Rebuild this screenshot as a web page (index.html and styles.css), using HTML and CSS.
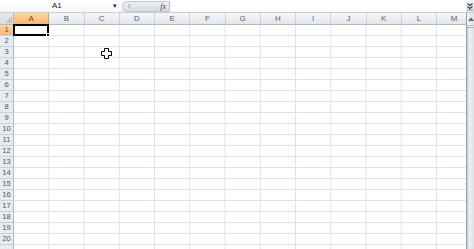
FILE: index.html
```html
<!DOCTYPE html>
<html>
<head>
<meta charset="utf-8">
<link rel="stylesheet" href="styles.css">
</head>
<body>
<div class="app">
  <div class="fbar">
    <div class="namebox"><span class="ref">A1</span><span class="dd">▾</span></div>
    <div class="pill"><span class="grip"></span><span class="fx">fx</span></div>
    <div class="finput"></div>
    <div class="expand">
      <svg width="8" height="9" viewBox="0 0 8 9"><path d="M1.5 1.5 L4 3.5 L6.5 1.5 M1.5 4.5 L4 6.5 L6.5 4.5" fill="none" stroke="#333" stroke-width="1.1"/><path d="M1 8 H7" stroke="#777" stroke-width="0.8"/></svg>
    </div>
  </div>
  <div class="main">
    <div class="sheet">
      <div class="corner"></div>
      <div class="colheads">
        <div class="ch sel">A</div><div class="ch">B</div><div class="ch">C</div><div class="ch">D</div><div class="ch">E</div><div class="ch">F</div><div class="ch">G</div><div class="ch">H</div><div class="ch">I</div><div class="ch">J</div><div class="ch">K</div><div class="ch">L</div><div class="ch">M</div>
      </div>
      <div class="rowheads">
        <div class="rh sel">1</div><div class="rh">2</div><div class="rh">3</div><div class="rh">4</div><div class="rh">5</div><div class="rh">6</div><div class="rh">7</div><div class="rh">8</div><div class="rh">9</div><div class="rh">10</div><div class="rh">11</div><div class="rh">12</div><div class="rh">13</div><div class="rh">14</div><div class="rh">15</div><div class="rh">16</div><div class="rh">17</div><div class="rh">18</div><div class="rh">19</div><div class="rh">20</div><div class="rh"></div>
      </div>
      <div class="cells">
        <div class="active"><span class="handle"></span></div>
        <svg class="pointer" width="11" height="11" viewBox="0 0 11 11"><path d="M3.5 0.5 H7.5 V3.5 H10.5 V7.5 H7.5 V10.5 H3.5 V7.5 H0.5 V3.5 H3.5 Z" fill="#fff" stroke="#000" stroke-width="1"/></svg>
      </div>
    </div>
    <div class="vscroll">
      <div class="sbtn"><svg width="6" height="4" viewBox="0 0 6 4"><path d="M0 4 L3 0.5 L6 4 Z" fill="#5d6470"/></svg></div>
      <div class="thumb"></div>
    </div>
  </div>
</div>
</body>
</html>
```

FILE: styles.css
```css
html, body {
  margin: 0;
  padding: 0;
  background: #ffffff;
}
body {
  width: 474px;
  height: 249px;
  overflow: hidden;
  font-family: "Liberation Sans", Arial, sans-serif;
}
.app {
  display: flex;
  flex-direction: column;
  width: 474px;
  height: 249px;
}
.fbar {
  display: flex;
  align-items: center;
  height: 12px;
  flex: 0 0 12px;
  border-bottom: 1px solid #c9ced6;
  background: linear-gradient(#ffffff, #f6f7f9);
}
.namebox {
  display: flex;
  align-items: center;
  width: 122px;
  height: 12px;
  box-sizing: border-box;
  padding-left: 52px;
  font-size: 8px;
  color: #222;
}
.ref {
  flex: 1;
  line-height: 10px;
}
.dd {
  font-size: 7px;
  color: #222;
  width: 8px;
  margin-right: 1px;
}
.pill {
  display: flex;
  align-items: center;
  width: 48px;
  height: 11px;
  box-sizing: border-box;
  border-radius: 6px 0 0 6px;
  background: linear-gradient(#eef0f3, #d7dbe1);
  border: 1px solid #c3c8d0;
  border-right: 1px solid #b9bec6;
  padding-left: 4px;
}
.grip {
  width: 3px;
  height: 5px;
  border-radius: 2px;
  background: #c7ccd3;
  border: 1px solid #e9ecf0;
}
.fx {
  margin-left: auto;
  margin-right: 3px;
  font-family: "Liberation Serif", serif;
  font-style: italic;
  font-size: 8px;
  color: #444;
  line-height: 9px;
}
.finput {
  flex: 1;
  height: 12px;
  background: #ffffff;
}
.expand {
  width: 8px;
  height: 12px;
  display: flex;
  align-items: center;
  justify-content: center;
  background: linear-gradient(#f4f5f7, #e2e5ea);
}
.main {
  flex: 1;
  display: flex;
  min-height: 0;
}
.sheet {
  flex: 1;
  display: grid;
  grid-template-columns: 14px 1fr;
  grid-template-rows: 12px 1fr;
  overflow: hidden;
  min-width: 0;
}
.corner {
  background: linear-gradient(#e6e9ed, #d9dde2);
  border-right: 1px solid #b3b9c2;
  border-bottom: 1px solid #b3b9c2;
  box-sizing: border-box;
  position: relative;
}
.corner::after {
  content: "";
  position: absolute;
  right: 1px;
  bottom: 1px;
  width: 0;
  height: 0;
  border-left: 7px solid transparent;
  border-bottom: 7px solid #bcc3cb;
}
.colheads {
  display: flex;
  overflow: hidden;
  border-bottom: 1px solid #b3b9c2;
  box-sizing: border-box;
  background: linear-gradient(#f5f6f8, #e3e6ea);
}
.ch {
  flex: 0 0 35.25px;
  box-sizing: border-box;
  border-right: 1px solid #ccd1d8;
  font-size: 8px;
  line-height: 11px;
  text-align: center;
  color: #566170;
}
.ch.sel {
  background: linear-gradient(#fbd7a4, #f5b772);
  color: #7a4a16;
  border-right-color: #d39e5e;
}
.rowheads {
  display: flex;
  flex-direction: column;
  overflow: hidden;
  border-right: 1px solid #b3b9c2;
  box-sizing: border-box;
  background: #e8ebef;
}
.rh {
  flex: 0 0 11px;
  box-sizing: border-box;
  border-bottom: 1px solid #ccd1d8;
  font-size: 7.5px;
  line-height: 10px;
  text-align: center;
  color: #4d5866;
}
.rh.sel {
  background: linear-gradient(#fbd7a4, #f5b772);
  color: #7a4a16;
}
.cells {
  position: relative;
  background-color: #ffffff;
  background-image:
    linear-gradient(to top, #dfe2e6 1px, transparent 1px),
    linear-gradient(to left, #dfe2e6 1px, transparent 1px);
  background-size: 35.25px 11px;
}
.active {
  position: absolute;
  left: -1px;
  top: -1px;
  width: 36px;
  height: 12px;
  box-sizing: border-box;
  border: 2px solid #000;
}
.handle {
  position: absolute;
  right: -3px;
  bottom: -3px;
  width: 4px;
  height: 4px;
  background: #000;
  border: 1px solid #fff;
  box-sizing: border-box;
}
.pointer {
  position: absolute;
  left: 87px;
  top: 23px;
}
.vscroll {
  flex: 0 0 8px;
  display: flex;
  flex-direction: column;
  border-left: 1px solid #9aa0a8;
  box-sizing: border-box;
  background: #e9ebee;
}
.sbtn {
  height: 12px;
  display: flex;
  align-items: center;
  justify-content: center;
  border-bottom: 1px solid #b8bec6;
  background: linear-gradient(to right, #f2f3f5, #dfe2e6);
}
.thumb {
  flex: 1;
  margin-top: 1px;
  border-top: 1px solid #aab0b8;
  background: linear-gradient(to right, #c9cdd3, #eef0f2 40%, #dcdfe3);
}
```
